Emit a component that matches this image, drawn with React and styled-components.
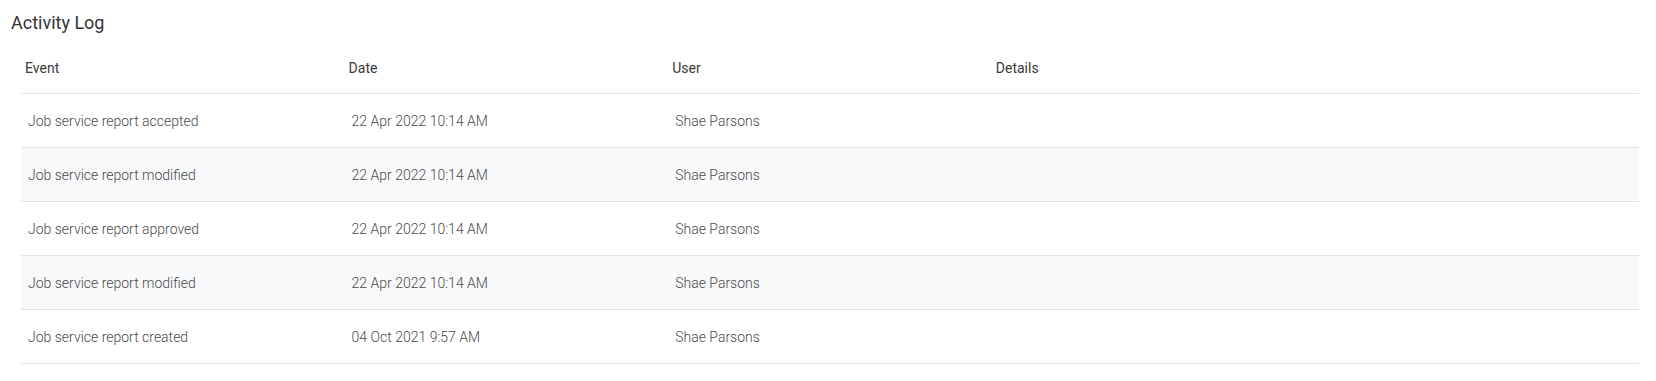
import React from "react";
import styled, { createGlobalStyle } from "styled-components";

const GlobalStyle = createGlobalStyle`
  body {
    margin: 0;
    background: #ffffff;
    font-family: Roboto, "Liberation Sans", Arial, sans-serif;
  }
`;

const rows = [
  { event: "Job service report accepted", date: "22 Apr 2022 10:14 AM", user: "Shae Parsons" },
  { event: "Job service report modified", date: "22 Apr 2022 10:14 AM", user: "Shae Parsons" },
  { event: "Job service report approved", date: "22 Apr 2022 10:14 AM", user: "Shae Parsons" },
  { event: "Job service report modified", date: "22 Apr 2022 10:14 AM", user: "Shae Parsons" },
  { event: "Job service report created", date: "04 Oct 2021 9:57 AM", user: "Shae Parsons" },
];

const ActivityLog = () => {
  return (
    <Wrapper>
      <Title>Activity Log</Title>
      <Table>
        <HeadRow>
          <HeadCell>Event</HeadCell>
          <HeadCell>Date</HeadCell>
          <HeadCell>User</HeadCell>
          <HeadCell>Details</HeadCell>
        </HeadRow>
        {rows.map((row, i) => (
          <BodyRow key={i} $striped={i % 2 === 1}>
            <Cell>{row.event}</Cell>
            <Cell>{row.date}</Cell>
            <Cell>{row.user}</Cell>
            <Cell>{row.details}</Cell>
          </BodyRow>
        ))}
      </Table>
    </Wrapper>
  );
};

const Wrapper = styled.div`
  padding: 12px 17px 18px 11px;
`;

const Title = styled.h2`
  margin: 0;
  font-size: 18px;
  font-weight: 400;
  line-height: 21px;
  color: #333333;
`;

const Table = styled.div`
  margin: 12px 0 0 10px;
  display: flex;
  flex-direction: column;
`;

const HeadRow = styled.div`
  display: grid;
  grid-template-columns: 20% 20% 20% 40%;
  border-bottom: 1px solid #e2e2e2;
`;

const HeadCell = styled.div`
  padding: 13px 3px 15px 4px;
  font-size: 14px;
  line-height: 20px;
  color: #3a3a3a;
`;

const BodyRow = styled.div`
  display: grid;
  grid-template-columns: 20% 20% 20% 40%;
  align-items: center;
  height: 53px;
  background: ${({ $striped }) => ($striped ? "#f8f9fb" : "#ffffff")};
  border-bottom: 1px solid #e2e2e2;
`;

const Cell = styled.div`
  padding: 1px 6px 0 7px;
  font-size: 14px;
  font-weight: 300;
  line-height: 20px;
  color: #4a4a4a;
`;

const App = () => (
  <>
    <GlobalStyle />
    <ActivityLog />
  </>
);

export default App;
